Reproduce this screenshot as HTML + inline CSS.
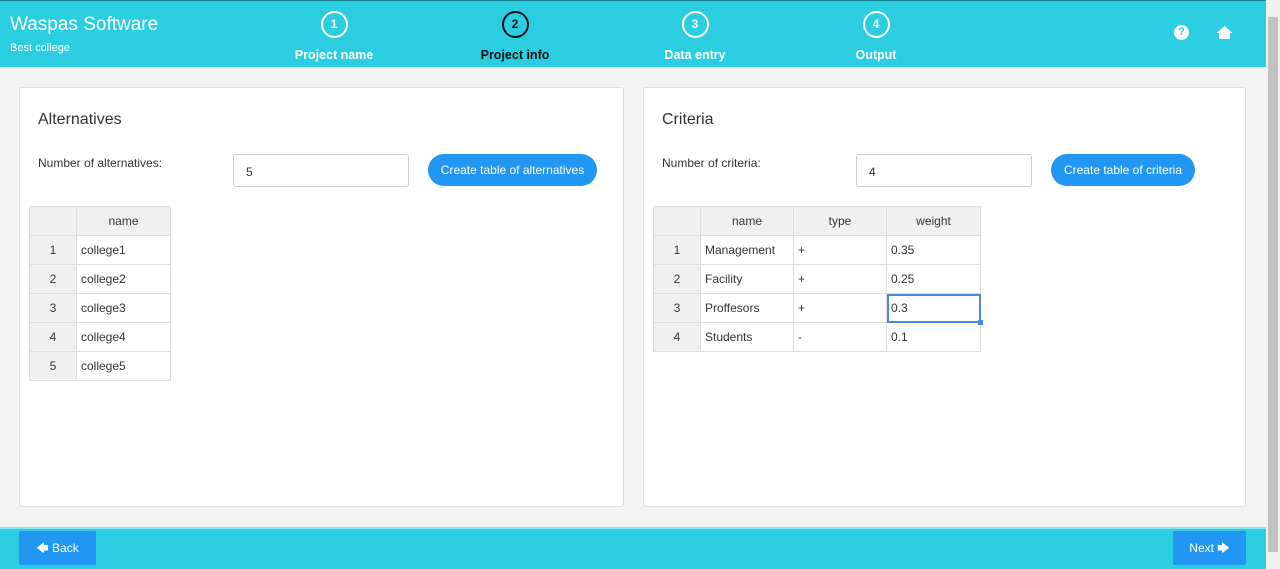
<!DOCTYPE html>
<html><head><style>
*{box-sizing:border-box;margin:0;padding:0}
body{width:1280px;height:569px;overflow:hidden;background:#f3f3f3;font-family:"Liberation Sans",sans-serif;position:relative;color:#333}
.hdr{position:absolute;left:0;top:0;width:1266px;height:67px;background:#2bcde0;border-top:1px solid #1a7f8c}
.title{position:absolute;left:10px;top:13px;color:#fff;font-size:19px}
.sub{position:absolute;left:10px;top:41px;color:#fff;font-size:11px}
.step{position:absolute;top:10px;width:120px;text-align:center;color:#fff;font-weight:bold;font-size:12.5px}
.step .c{width:27px;height:27px;border:2px solid #fff;border-radius:50%;margin:0 auto 10px;font-size:12px;line-height:23px}
.step.a{color:#111}.step.a .c{border-color:#111}
.panel{position:absolute;top:87px;height:420px;background:#fff;border:1px solid #ddd;border-radius:3px}
.ph{position:absolute;left:18px;top:23px;font-size:16px;color:#333}
.lbl{position:absolute;left:18px;top:68px;font-size:12px}
.inp{position:absolute;top:66px;width:176px;height:33px;border:1px solid #ccc;border-radius:3px;font-size:12px;padding:10px 12px}
.btn{position:absolute;top:66px;height:32px;background:#2196f3;color:#fff;border-radius:16px;font-size:12px;text-align:center;line-height:32px}
table{position:absolute;top:118px;border-collapse:collapse;font-size:12px}
td{border:1px solid #ddd;height:29px;padding:0 4px;white-space:nowrap}
tr:first-child td,td:first-child{background:#f0f0f0;text-align:center}
.sel{outline:2px solid #4b89dc;outline-offset:-2px;position:relative}
.ftr{position:absolute;left:0;top:527px;width:1266px;height:42px;background:#2bcde0;border-top:2px solid #8fe3ee}
.fb{position:absolute;top:2px;height:34px;background:#2196f3;color:#fff;font-size:12px;line-height:34px;text-align:center;border-radius:2px}
.sb{position:absolute;left:1266px;top:0;width:14px;height:569px;background:#f0f0f0}
.sb div{position:absolute;left:2px;top:17px;width:10px;height:535px;background:#c1c1c1}
</style></head><body>
<div class="hdr">
<div class="title">Waspas Software</div><div class="sub">Best college</div>
<div class="step" style="left:274px"><div class="c">1</div>Project name</div>
<div class="step a" style="left:455px"><div class="c">2</div>Project info</div>
<div class="step" style="left:635px"><div class="c">3</div>Data entry</div>
<div class="step" style="left:816px"><div class="c">4</div>Output</div>
<div style="position:absolute;left:1174px;top:24px;width:15px;height:15px;border-radius:50%;background:#fff;color:#2bcde0;font-size:11px;font-weight:bold;text-align:center;line-height:15px">?</div>
<svg style="position:absolute;left:1216px;top:24px" width="17" height="15" viewBox="0 0 17 15"><path d="M8.5 1L0.5 8H3V14H14V8H16.5Z" fill="#fff"/></svg>
</div>
<div class="panel" style="left:19px;width:605px">
<div class="ph">Alternatives</div><div class="lbl">Number of alternatives:</div>
<div class="inp" style="left:213px">5</div>
<div class="btn" style="left:408px;width:169px">Create table of alternatives</div>
<table style="left:9px"><tr><td style="width:47px"></td><td style="width:94px">name</td></tr>
<tr><td>1</td><td>college1</td></tr><tr><td>2</td><td>college2</td></tr><tr><td>3</td><td>college3</td></tr><tr><td>4</td><td>college4</td></tr><tr><td>5</td><td>college5</td></tr></table>
</div>
<div class="panel" style="left:643px;width:603px">
<div class="ph">Criteria</div><div class="lbl">Number of criteria:</div>
<div class="inp" style="left:212px">4</div>
<div class="btn" style="left:407px;width:144px">Create table of criteria</div>
<table style="left:9px"><tr><td style="width:47px"></td><td style="width:93px;background:#f0f0f0;text-align:center">name</td><td style="width:93px;text-align:center">type</td><td style="width:94px;text-align:center">weight</td></tr>
<tr><td>1</td><td>Management</td><td>+</td><td>0.35</td></tr>
<tr><td>2</td><td>Facility</td><td>+</td><td>0.25</td></tr>
<tr><td>3</td><td>Proffesors</td><td>+</td><td class="sel">0.3<span style="position:absolute;right:-3px;bottom:-3px;width:5px;height:5px;background:#4b89dc"></span></td></tr>
<tr><td>4</td><td>Students</td><td>-</td><td>0.1</td></tr></table>
</div>
<div class="ftr">
<div class="fb" style="left:19px;width:77px">&#x1F844; Back</div>
<div class="fb" style="left:1173px;width:73px">Next &#x1F846;</div>
</div>
<div class="sb"><div></div></div>
</body></html>
